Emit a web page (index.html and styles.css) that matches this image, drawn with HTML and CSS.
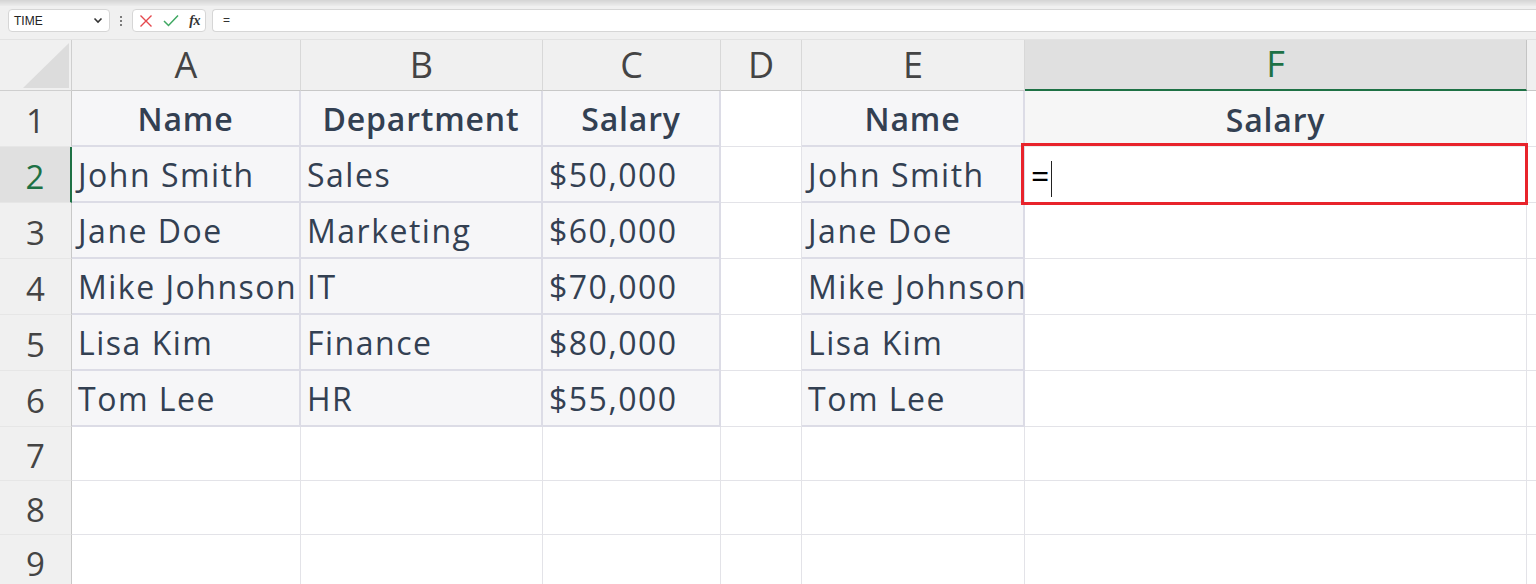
FILE: index.html
```html
<!DOCTYPE html>
<html>
<head>
<meta charset="utf-8">
<link rel="stylesheet" href="styles.css">
</head>
<body>
<div class="app">
  <div class="ribbon-edge"></div>
  <div class="formula-row">
    <div class="namebox">
      <span class="namebox-text">TIME</span>
      <svg class="chev" width="10" height="7" viewBox="0 0 10 7"><path d="M1.5 1.5 L5 5 L8.5 1.5" fill="none" stroke="#333" stroke-width="1.6"/></svg>
    </div>
    <div class="vdots"><span></span><span></span><span></span></div>
    <div class="fbtns">
      <svg width="14" height="14" viewBox="0 0 14 14"><path d="M1.5 1.5 L12.5 12.5 M12.5 1.5 L1.5 12.5" stroke="#e5484d" stroke-width="1.4" fill="none"/></svg>
      <svg width="16" height="13" viewBox="0 0 16 13"><path d="M1 7 L5.5 11.5 L15 1.5" stroke="#3fa862" stroke-width="1.5" fill="none"/></svg>
      <span class="fx">fx</span>
    </div>
    <div class="finput">=</div>
  </div>
  <div class="sheet">
    <div class="corner"><div class="tri"></div></div>
    <div class="ch">A</div>
    <div class="ch">B</div>
    <div class="ch">C</div>
    <div class="ch">D</div>
    <div class="ch">E</div>
    <div class="ch sel">F</div>
    <div class="ch rest"></div>

    <div class="rh">1</div>
    <div class="c fill hd">Name</div>
    <div class="c fill hd">Department</div>
    <div class="c fill hd">Salary</div>
    <div class="c"></div>
    <div class="c fill hd">Name</div>
    <div class="c fillf hd">Salary</div>
    <div class="c rest"></div>

    <div class="rh sel">2</div>
    <div class="c fill">John Smith</div>
    <div class="c fill">Sales</div>
    <div class="c fill">$50,000</div>
    <div class="c"></div>
    <div class="c fill">John Smith</div>
    <div class="c active"><span class="eq">=</span><span class="caret"></span></div>
    <div class="c rest"></div>

    <div class="rh">3</div>
    <div class="c fill">Jane Doe</div>
    <div class="c fill">Marketing</div>
    <div class="c fill">$60,000</div>
    <div class="c"></div>
    <div class="c fill">Jane Doe</div>
    <div class="c"></div>
    <div class="c rest"></div>

    <div class="rh">4</div>
    <div class="c fill">Mike Johnson</div>
    <div class="c fill">IT</div>
    <div class="c fill">$70,000</div>
    <div class="c"></div>
    <div class="c fill">Mike Johnson</div>
    <div class="c"></div>
    <div class="c rest"></div>

    <div class="rh">5</div>
    <div class="c fill">Lisa Kim</div>
    <div class="c fill">Finance</div>
    <div class="c fill">$80,000</div>
    <div class="c"></div>
    <div class="c fill">Lisa Kim</div>
    <div class="c"></div>
    <div class="c rest"></div>

    <div class="rh">6</div>
    <div class="c fill">Tom Lee</div>
    <div class="c fill">HR</div>
    <div class="c fill">$55,000</div>
    <div class="c"></div>
    <div class="c fill">Tom Lee</div>
    <div class="c"></div>
    <div class="c rest"></div>

    <div class="rh">7</div>
    <div class="c"></div><div class="c"></div><div class="c"></div><div class="c"></div><div class="c"></div><div class="c"></div><div class="c rest"></div>
    <div class="rh">8</div>
    <div class="c"></div><div class="c"></div><div class="c"></div><div class="c"></div><div class="c"></div><div class="c"></div><div class="c rest"></div>
    <div class="rh">9</div>
    <div class="c"></div><div class="c"></div><div class="c"></div><div class="c"></div><div class="c"></div><div class="c"></div><div class="c rest"></div>
  </div>
</div>
</body>
</html>
```

FILE: styles.css
```css
* { box-sizing: border-box; }
html, body { margin: 0; padding: 0; }
body {
  width: 1536px;
  height: 584px;
  overflow: hidden;
  background: #ffffff;
  font-family: "Open Sans", "Noto Sans", sans-serif;
}
.app { width: 1536px; }
.ribbon-edge {
  height: 6px;
  background: linear-gradient(#d4d4d4, #ececec);
}
.formula-row {
  height: 34px;
  background: #f0f0f0;
  display: flex;
  align-items: flex-start;
  padding: 3px 0 0 8px;
  border-bottom: 1px solid #e2e2e2;
}
.namebox {
  width: 102px;
  height: 23px;
  background: #fff;
  border: 1px solid #d6d6d6;
  border-radius: 4px;
  display: flex;
  align-items: center;
  justify-content: space-between;
  padding: 0 6px 0 5px;
}
.namebox-text {
  font-family: "Liberation Sans", sans-serif;
  font-size: 12px;
  color: #222;
}
.vdots {
  width: 22px;
  height: 23px;
  display: flex;
  flex-direction: column;
  align-items: center;
  justify-content: center;
  gap: 2px;
}
.vdots span {
  width: 2px;
  height: 2px;
  background: #555;
  border-radius: 1px;
}
.fbtns {
  width: 74px;
  height: 23px;
  background: #fff;
  border: 1px solid #d6d6d6;
  border-radius: 4px;
  display: flex;
  align-items: center;
  justify-content: space-between;
  padding: 0 5px 0 6px;
}
.fx {
  font-family: "Liberation Serif", serif;
  font-style: italic;
  font-weight: bold;
  font-size: 14px;
  color: #333;
  letter-spacing: -0.5px;
}
.finput {
  flex: 1;
  margin-left: 6px;
  height: 23px;
  background: #fff;
  border: 1px solid #d6d6d6;
  border-right: none;
  border-radius: 4px 0 0 4px;
  font-family: "Liberation Sans", sans-serif;
  font-size: 12px;
  color: #333;
  padding: 3px 0 0 10px;
}

.sheet {
  display: grid;
  grid-template-columns: 72px 229px 242px 178px 81px 223px 502px 9px;
  grid-template-rows: 51px repeat(6, 56px) repeat(3, 54px);
}
.corner {
  background: #f0f0f0;
  border-right: 1px solid #cfcfcf;
  border-bottom: 1px solid #cfcfcf;
  position: relative;
}
.tri {
  position: absolute;
  right: 2px;
  bottom: 2px;
  width: 0;
  height: 0;
  border-left: 46px solid transparent;
  border-bottom: 45px solid #dcdcdc;
}
.ch {
  background: #f0f0f0;
  border-right: 1px solid #d8d8d8;
  border-bottom: 1px solid #c8c8c8;
  color: #444;
  font-size: 36px;
  display: flex;
  align-items: flex-end;
  justify-content: center;
  line-height: 50px;
  padding-top: 1px;
}
.ch.sel {
  background: #e0e0e0;
  color: #1e7145;
  border-bottom: 2px solid #1e7145;
  border-right: 1px solid #c4c4c4;
}
.ch.rest { border-right: none; }
.rh {
  background: #f0f0f0;
  border-right: 1px solid #c8c8c8;
  border-bottom: 1px solid #e6e6e6;
  color: #444;
  font-size: 33px;
  display: flex;
  align-items: center;
  justify-content: center;
  padding-top: 3px;
}
.rh.sel {
  background: #e0e0e0;
  color: #1e7145;
  border-right: 2px solid #1e7145;
}
.c {
  border-right: 1px solid #e3e3e8;
  border-bottom: 1px solid #e3e3e8;
  background: #fff;
  color: #334052;
  font-size: 32px;
  letter-spacing: 1.5px;
  line-height: 1;
  display: flex;
  align-items: flex-end;
  padding: 0 0 10px 6px;
  white-space: nowrap;
}
.c.fill {
  background: #f6f6f8;
  border-right: 2px solid #dcdce6;
  border-bottom: 2px solid #dcdce6;
}
.c.fillf {
  background: #f6f6f6;
  border-bottom: 1px solid #ececec;
}
.c.hd {
  justify-content: center;
  font-weight: 600;
  letter-spacing: 0.8px;
  padding-left: 0;
}
.c.rest { border-right: none; }
.c.active {
  position: relative;
  color: #000;
  padding-left: 6px;
  padding-bottom: 10px;
}
.c.active::after {
  content: "";
  position: absolute;
  left: -4px;
  top: -4px;
  right: -2px;
  bottom: -3px;
  border: 3px solid #e8232b;
}
.eq { font-size: 32px; }
.caret {
  display: inline-block;
  width: 1px;
  height: 36px;
  background: #222;
  margin-left: 0;
  margin-bottom: -5px;
}
```
